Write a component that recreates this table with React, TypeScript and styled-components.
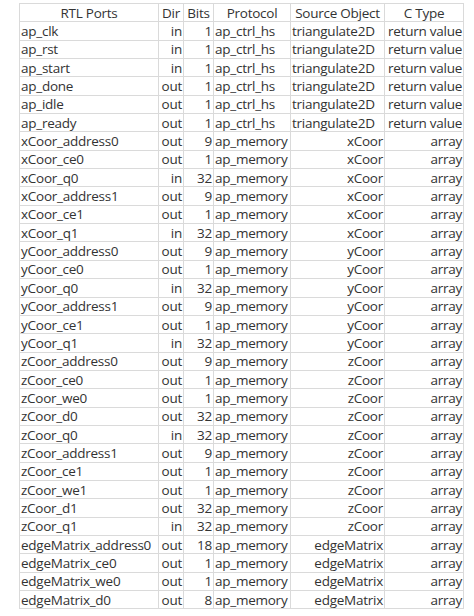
import React from 'react';
import styled, { createGlobalStyle } from 'styled-components';

interface PortRow {
  name: string;
  dir: 'in' | 'out';
  bits: number;
  protocol: string;
  source: string;
  ctype: string;
}

const GlobalStyle = createGlobalStyle`
  html, body {
    margin: 0;
    padding: 0;
    background: #ffffff;
  }
  body {
    font-family: "Open Sans", "DejaVu Sans", sans-serif;
  }
`;

const ctrl = (name: string, dir: 'in' | 'out'): PortRow => ({
  name,
  dir,
  bits: 1,
  protocol: 'ap_ctrl_hs',
  source: 'triangulate2D',
  ctype: 'return value',
});

const mem = (name: string, dir: 'in' | 'out', bits: number, source: string): PortRow => ({
  name,
  dir,
  bits,
  protocol: 'ap_memory',
  source,
  ctype: 'array',
});

const rows: PortRow[] = [
  ctrl('ap_clk', 'in'),
  ctrl('ap_rst', 'in'),
  ctrl('ap_start', 'in'),
  ctrl('ap_done', 'out'),
  ctrl('ap_idle', 'out'),
  ctrl('ap_ready', 'out'),
  mem('xCoor_address0', 'out', 9, 'xCoor'),
  mem('xCoor_ce0', 'out', 1, 'xCoor'),
  mem('xCoor_q0', 'in', 32, 'xCoor'),
  mem('xCoor_address1', 'out', 9, 'xCoor'),
  mem('xCoor_ce1', 'out', 1, 'xCoor'),
  mem('xCoor_q1', 'in', 32, 'xCoor'),
  mem('yCoor_address0', 'out', 9, 'yCoor'),
  mem('yCoor_ce0', 'out', 1, 'yCoor'),
  mem('yCoor_q0', 'in', 32, 'yCoor'),
  mem('yCoor_address1', 'out', 9, 'yCoor'),
  mem('yCoor_ce1', 'out', 1, 'yCoor'),
  mem('yCoor_q1', 'in', 32, 'yCoor'),
  mem('zCoor_address0', 'out', 9, 'zCoor'),
  mem('zCoor_ce0', 'out', 1, 'zCoor'),
  mem('zCoor_we0', 'out', 1, 'zCoor'),
  mem('zCoor_d0', 'out', 32, 'zCoor'),
  mem('zCoor_q0', 'in', 32, 'zCoor'),
  mem('zCoor_address1', 'out', 9, 'zCoor'),
  mem('zCoor_ce1', 'out', 1, 'zCoor'),
  mem('zCoor_we1', 'out', 1, 'zCoor'),
  mem('zCoor_d1', 'out', 32, 'zCoor'),
  mem('zCoor_q1', 'in', 32, 'zCoor'),
  mem('edgeMatrix_address0', 'out', 18, 'edgeMatrix'),
  mem('edgeMatrix_ce0', 'out', 1, 'edgeMatrix'),
  mem('edgeMatrix_we0', 'out', 1, 'edgeMatrix'),
  mem('edgeMatrix_d0', 'out', 8, 'edgeMatrix'),
];

// column widths measured off the screenshot
const columns = [
  { title: 'RTL Ports', width: 139 },
  { title: 'Dir', width: 25 },
  { title: 'Bits', width: 30 },
  { title: 'Protocol', width: 77 },
  { title: 'Source Object', width: 94 },
  { title: 'C Type', width: 79 },
];

const Page = styled.div`
  padding: 3px 0 0 19px;
`;

const Table = styled.table`
  border-collapse: collapse;
  table-layout: fixed;
  width: 444px;
  color: #333333;
  font-size: 13.5px;
  letter-spacing: -0.25px;
`;

const Row = styled.tr`
  height: 18.35px;
`;

const HeadCell = styled.th`
  border: 1px solid #dadada;
  font-weight: normal;
  text-align: center;
  padding: 0 1px;
  line-height: 16px;
  white-space: nowrap;
  overflow: hidden;
`;

const Cell = styled.td<{ align?: 'left' | 'right' }>`
  border: 1px solid #dadada;
  padding: 0 1px;
  line-height: 16px;
  text-align: ${props => props.align || 'left'};
  white-space: nowrap;
  overflow: hidden;
`;

const App: React.FC = () => {
  return (
    <Page>
      <GlobalStyle />
      <Table>
        <colgroup>
          {columns.map(col => (
            <col key={col.title} style={{ width: col.width }} />
          ))}
        </colgroup>
        <thead>
          <Row>
            {columns.map(col => (
              <HeadCell key={col.title}>{col.title}</HeadCell>
            ))}
          </Row>
        </thead>
        <tbody>
          {rows.map(row => (
            <Row key={row.name}>
              <Cell>{row.name}</Cell>
              <Cell align="right">{row.dir}</Cell>
              <Cell align="right">{row.bits}</Cell>
              <Cell>{row.protocol}</Cell>
              <Cell align={row.source === 'triangulate2D' ? 'left' : 'right'}>{row.source}</Cell>
              <Cell align="right">{row.ctype}</Cell>
            </Row>
          ))}
        </tbody>
      </Table>
    </Page>
  );
};

export default App;
